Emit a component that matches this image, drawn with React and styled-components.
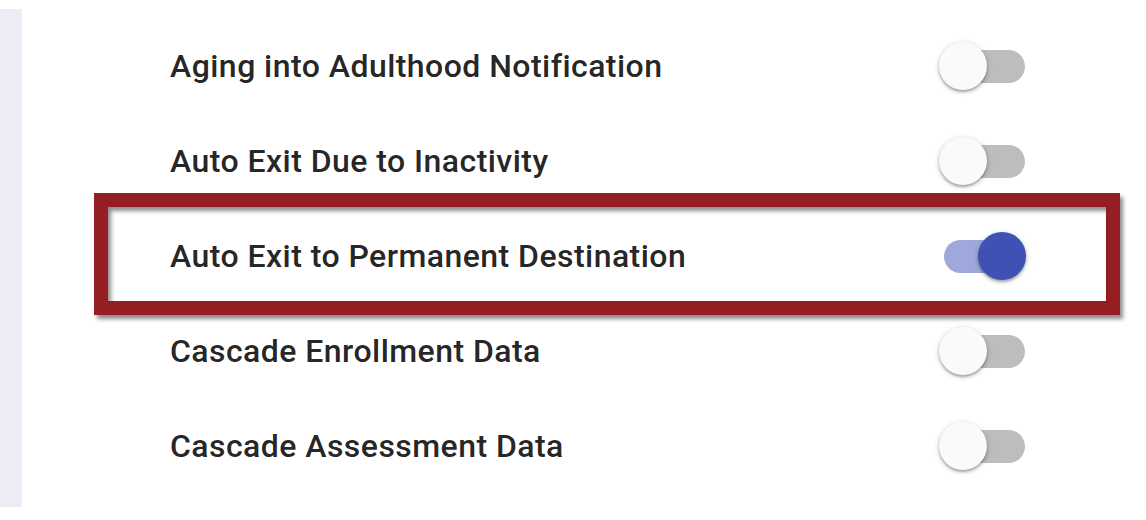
import React, { useState } from 'react'
import styled, { createGlobalStyle } from 'styled-components'

const Global = createGlobalStyle`
  body {
    margin: 0;
    background: #ffffff;
    font-family: Roboto, "Noto Sans", sans-serif;
  }
`;

const Page = styled.div`
  display: flex;
  flex-direction: row;
  width: 1146px;
  height: 520px;
  overflow: hidden;
`;

const SideStrip = styled.div`
  width: 22px;
  height: 498px;
  margin-top: 9px;
  background-color: #ecedf4;
  flex-shrink: 0;
`;

const Content = styled.div`
  position: relative;
  padding: 18px 0 0 148px;
`;

const List = styled.ul`
  list-style: none;
  margin: 0;
  padding: 0;
  width: 855px;
`;

const Row = styled.li`
  display: flex;
  align-items: center;
  justify-content: space-between;
  height: 95px;
`;

const Label = styled.span`
  font-size: 32px;
  font-weight: 500;
  color: rgba(0, 0, 0, 0.87);
  letter-spacing: 0.45px;
`;

const SwitchBase = styled.button`
  position: relative;
  width: 86px;
  height: 48px;
  padding: 0;
  border: none;
  background: transparent;
  cursor: pointer;
`;

const Track = styled.span`
  position: absolute;
  right: 0;
  top: 8px;
  width: 81px;
  height: 33px;
  border-radius: 17px;
  background-color: ${p => (p.$on ? '#9fa8da' : '#bdbdbd')};
`;

const Knob = styled.span`
  position: absolute;
  top: 0;
  left: ${p => (p.$on ? '39px' : '0')};
  width: 48px;
  height: 48px;
  border-radius: 50%;
  background-color: ${p => (p.$on ? '#3f51b5' : '#fafafa')};
  box-shadow: 0 2px 2px rgba(0, 0, 0, 0.2), 0 2px 4px rgba(0, 0, 0, 0.14), 0 1px 6px rgba(0, 0, 0, 0.12);
  transition: left 0.15s;
`;

const Highlight = styled.div`
  position: absolute;
  left: 72px;
  top: 193px;
  width: 998px;
  height: 94px;
  border: 14px solid #951e22;
  box-shadow: 3px 4px 4px rgba(0, 0, 0, 0.45), inset 3px 4px 4px rgba(0, 0, 0, 0.45);
  pointer-events: none;
`;

const Toggle = ({ on, onChange }) => (
  <SwitchBase role="switch" aria-checked={on} onClick={onChange}>
    <Track $on={on} />
    <Knob $on={on} />
  </SwitchBase>
);

const initial = [
  { label: 'Aging into Adulthood Notification', on: false },
  { label: 'Auto Exit Due to Inactivity', on: false },
  { label: 'Auto Exit to Permanent Destination', on: true },
  { label: 'Cascade Enrollment Data', on: false },
  { label: 'Cascade Assessment Data', on: false },
];

const App = () => {
  const [items, setItems] = useState(initial);

  const flip = i =>
    setItems(items.map((it, j) => (j === i ? { ...it, on: !it.on } : it)));

  return (
    <Page>
      <Global />
      <SideStrip />
      <Content>
        <List>
          {items.map((it, i) => (
            <Row key={it.label}>
              <Label>{it.label}</Label>
              <Toggle on={it.on} onChange={() => flip(i)} />
            </Row>
          ))}
        </List>
        <Highlight />
      </Content>
    </Page>
  )
}

export default App
